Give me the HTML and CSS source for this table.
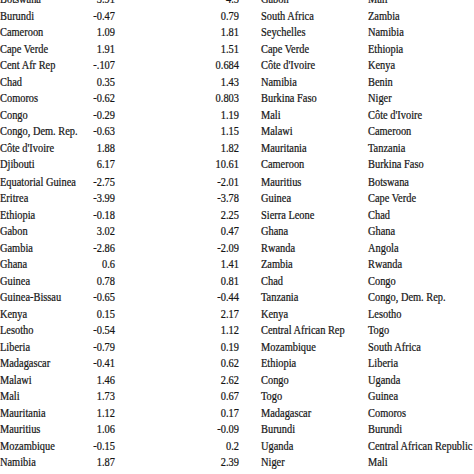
FILE: index.html
```html
<!DOCTYPE html>
<html>
<head>
<meta charset="utf-8">
<link rel="stylesheet" href="styles.css">
</head>
<body>
<div class="sheet">
  <div class="row"><span class="name">Botswana</span><span class="num">3.91</span><span class="num">4.5</span><span class="c4">Gabon</span><span class="c5">Mali</span></div>
  <div class="row"><span class="name">Burundi</span><span class="num">-0.47</span><span class="num">0.79</span><span class="c4">South Africa</span><span class="c5">Zambia</span></div>
  <div class="row"><span class="name">Cameroon</span><span class="num">1.09</span><span class="num">1.81</span><span class="c4">Seychelles</span><span class="c5">Namibia</span></div>
  <div class="row"><span class="name">Cape Verde</span><span class="num">1.91</span><span class="num">1.51</span><span class="c4">Cape Verde</span><span class="c5">Ethiopia</span></div>
  <div class="row"><span class="name">Cent Afr Rep</span><span class="num">-.107</span><span class="num">0.684</span><span class="c4">Côte d'Ivoire</span><span class="c5">Kenya</span></div>
  <div class="row"><span class="name">Chad</span><span class="num">0.35</span><span class="num">1.43</span><span class="c4">Namibia</span><span class="c5">Benin</span></div>
  <div class="row"><span class="name">Comoros</span><span class="num">-0.62</span><span class="num">0.803</span><span class="c4">Burkina Faso</span><span class="c5">Niger</span></div>
  <div class="row"><span class="name">Congo</span><span class="num">-0.29</span><span class="num">1.19</span><span class="c4">Mali</span><span class="c5">Côte d'Ivoire</span></div>
  <div class="row"><span class="name">Congo, Dem. Rep.</span><span class="num">-0.63</span><span class="num">1.15</span><span class="c4">Malawi</span><span class="c5">Cameroon</span></div>
  <div class="row"><span class="name">Côte d'Ivoire</span><span class="num">1.88</span><span class="num">1.82</span><span class="c4">Mauritania</span><span class="c5">Tanzania</span></div>
  <div class="row"><span class="name">Djibouti</span><span class="num">6.17</span><span class="num">10.61</span><span class="c4">Cameroon</span><span class="c5">Burkina Faso</span></div>
  <div class="row"><span class="name">Equatorial Guinea</span><span class="num">-2.75</span><span class="num">-2.01</span><span class="c4">Mauritius</span><span class="c5">Botswana</span></div>
  <div class="row"><span class="name">Eritrea</span><span class="num">-3.99</span><span class="num">-3.78</span><span class="c4">Guinea</span><span class="c5">Cape Verde</span></div>
  <div class="row"><span class="name">Ethiopia</span><span class="num">-0.18</span><span class="num">2.25</span><span class="c4">Sierra Leone</span><span class="c5">Chad</span></div>
  <div class="row"><span class="name">Gabon</span><span class="num">3.02</span><span class="num">0.47</span><span class="c4">Ghana</span><span class="c5">Ghana</span></div>
  <div class="row"><span class="name">Gambia</span><span class="num">-2.86</span><span class="num">-2.09</span><span class="c4">Rwanda</span><span class="c5">Angola</span></div>
  <div class="row"><span class="name">Ghana</span><span class="num">0.6</span><span class="num">1.41</span><span class="c4">Zambia</span><span class="c5">Rwanda</span></div>
  <div class="row"><span class="name">Guinea</span><span class="num">0.78</span><span class="num">0.81</span><span class="c4">Chad</span><span class="c5">Congo</span></div>
  <div class="row"><span class="name">Guinea-Bissau</span><span class="num">-0.65</span><span class="num">-0.44</span><span class="c4">Tanzania</span><span class="c5">Congo, Dem. Rep.</span></div>
  <div class="row"><span class="name">Kenya</span><span class="num">0.15</span><span class="num">2.17</span><span class="c4">Kenya</span><span class="c5">Lesotho</span></div>
  <div class="row"><span class="name">Lesotho</span><span class="num">-0.54</span><span class="num">1.12</span><span class="c4">Central African Rep</span><span class="c5">Togo</span></div>
  <div class="row"><span class="name">Liberia</span><span class="num">-0.79</span><span class="num">0.19</span><span class="c4">Mozambique</span><span class="c5">South Africa</span></div>
  <div class="row"><span class="name">Madagascar</span><span class="num">-0.41</span><span class="num">0.62</span><span class="c4">Ethiopia</span><span class="c5">Liberia</span></div>
  <div class="row"><span class="name">Malawi</span><span class="num">1.46</span><span class="num">2.62</span><span class="c4">Congo</span><span class="c5">Uganda</span></div>
  <div class="row"><span class="name">Mali</span><span class="num">1.73</span><span class="num">0.67</span><span class="c4">Togo</span><span class="c5">Guinea</span></div>
  <div class="row"><span class="name">Mauritania</span><span class="num">1.12</span><span class="num">0.17</span><span class="c4">Madagascar</span><span class="c5">Comoros</span></div>
  <div class="row"><span class="name">Mauritius</span><span class="num">1.06</span><span class="num">-0.09</span><span class="c4">Burundi</span><span class="c5">Burundi</span></div>
  <div class="row"><span class="name">Mozambique</span><span class="num">-0.15</span><span class="num">0.2</span><span class="c4">Uganda</span><span class="c5">Central African Republic</span></div>
  <div class="row"><span class="name">Namibia</span><span class="num">1.87</span><span class="num">2.39</span><span class="c4">Niger</span><span class="c5">Mali</span></div>
  <div class="row"><span class="name">Niger</span><span class="num">0.58</span><span class="num">1.08</span><span class="c4">Lesotho</span><span class="c5">Madagascar</span></div>
</div>
</body>
</html>
```
FILE: styles.css
```css
html {
  overflow: hidden;
  background: #ffffff;
}
body {
  margin: 0;
  padding: 0;
}
.sheet {
  margin-top: -9.3px;
  padding-bottom: 60px;
  font-family: "Liberation Serif", "Times New Roman", serif;
  font-size: 10.4px;
  color: #161616;
  -webkit-text-stroke: 0.2px #161616;
  transform: scaleY(1.1);
  transform-origin: 0 0;
}
.row {
  display: grid;
  grid-template-columns: 70px 45px 124px 129px 1fr;
  height: 15.055px;
  line-height: 15.055px;
  white-space: nowrap;
}
.name { text-align: left; }
.num { text-align: right; }
.c4 { padding-left: 22px; }
.c5 { text-align: left; }
```
